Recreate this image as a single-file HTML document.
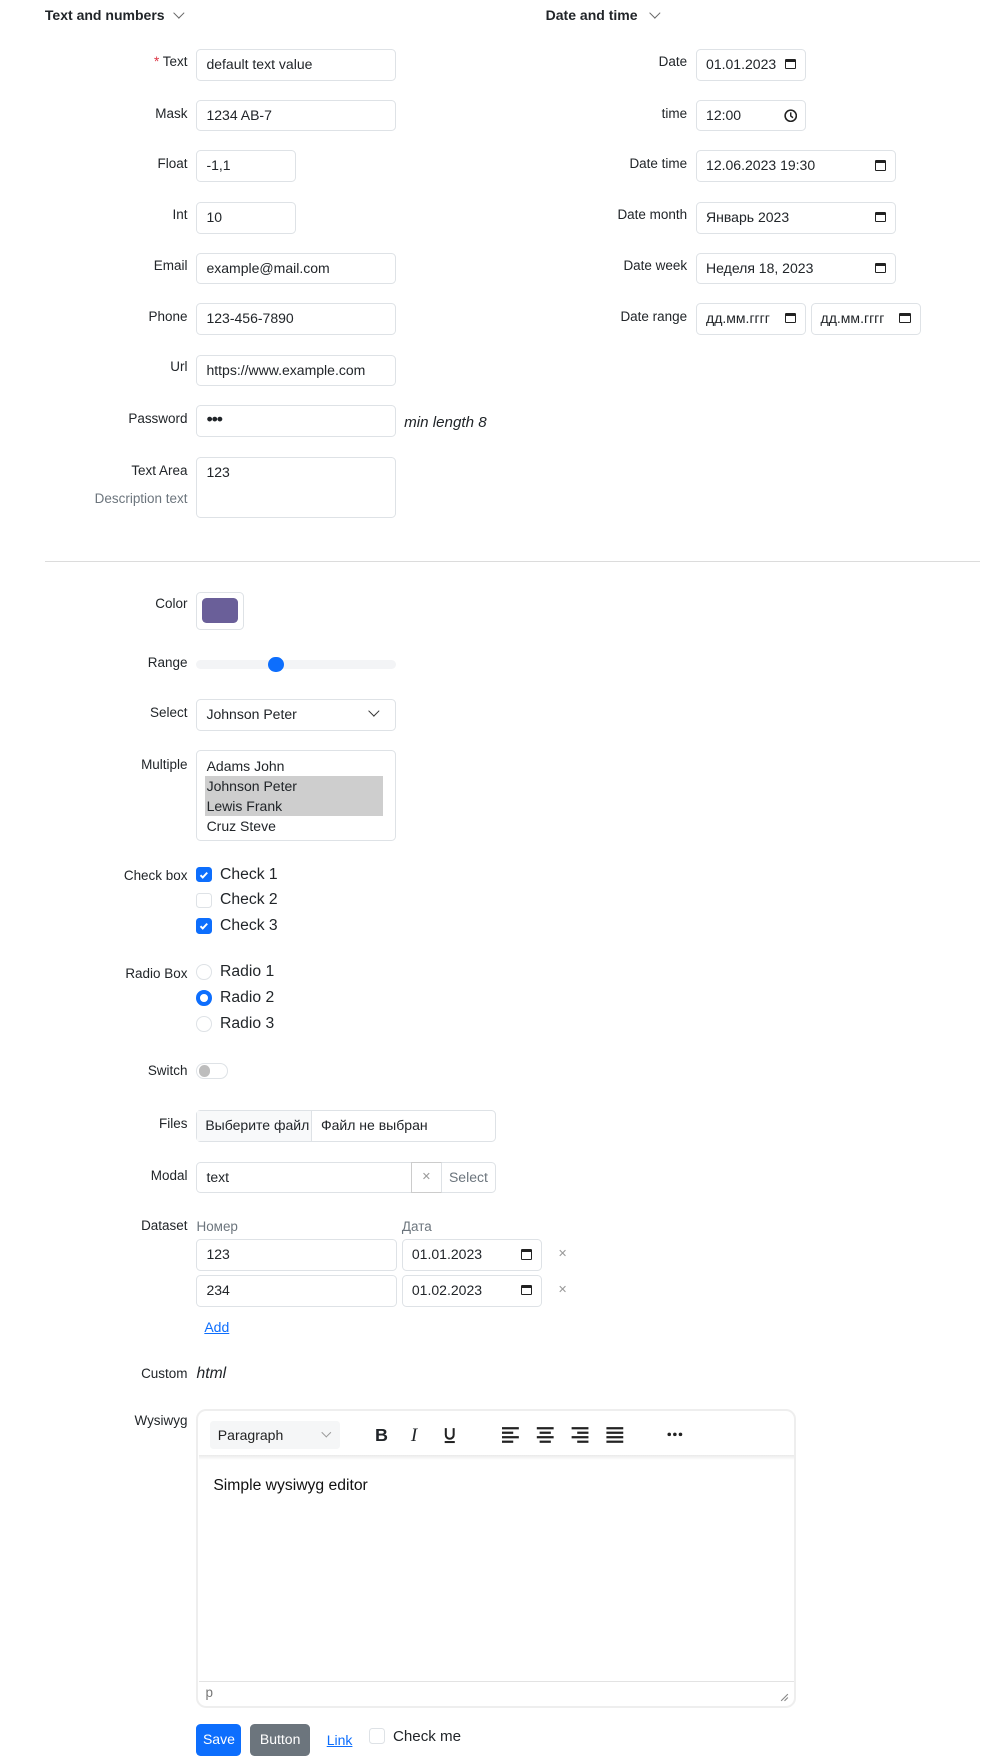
<!DOCTYPE html>
<html><head><meta charset="utf-8">
<style>
html{zoom:1.1227}
body{margin:0;width:880px;height:1568px;position:relative;background:#fff;font-family:"Liberation Sans","Noto Sans CJK SC",sans-serif;color:#212529;font-size:12px;overflow:hidden}
.a{position:absolute}
.h{font-weight:bold;font-size:12.5px;color:#212529}
.l{position:absolute;text-align:right;font-size:12px;color:#212529;white-space:nowrap}
.i{position:absolute;box-sizing:border-box;height:28px;border:1px solid #dee2e6;border-radius:4px;background:#fff;font-size:12.5px;padding:0 8px;line-height:26px;white-space:nowrap;color:#212529}
.cal{position:absolute;right:8px;top:8px;width:10px;height:9px;border:1.6px solid #222;border-top-width:3px;box-sizing:border-box;border-radius:1px}
.cb{position:absolute;width:14px;height:14px;box-sizing:border-box;border-radius:3px;border:1px solid #dee2e6;background:#fff}
.cb.on{background:#0d6efd;border-color:#0d6efd}
.rd{position:absolute;width:14px;height:14px;box-sizing:border-box;border-radius:50%;border:1px solid #dee2e6;background:#fff}
.t14{font-size:14px;position:absolute;white-space:nowrap}
.chev{position:absolute;width:6px;height:6px;border-right:1.3px solid #444;border-bottom:1.3px solid #444;transform:rotate(45deg)}
.bar{position:absolute;height:2px;background:#222}
</style></head><body>

<div class="a h" style="left:40px;top:6px">Text and numbers</div>
<div class="chev" style="left:156px;top:8px;border-color:#666;border-width:0 1px 1px 0;width:6px;height:6px"></div>
<div class="a h" style="left:486px;top:6px">Date and time</div>
<div class="chev" style="left:580px;top:8px;border-color:#666;border-width:0 1px 1px 0;width:6px;height:6px"></div>

<!-- left col -->
<div class="l" style="right:713px;top:48px"><span style="color:#dc3545">*</span> Text</div>
<div class="i" style="left:175px;top:44px;width:178px">default text value</div>
<div class="l" style="right:713px;top:94px">Mask</div>
<div class="i" style="left:175px;top:89px;width:178px">1234 AB-7</div>
<div class="l" style="right:713px;top:139px">Float</div>
<div class="i" style="left:175px;top:134px;width:89px">-1,1</div>
<div class="l" style="right:713px;top:184px">Int</div>
<div class="i" style="left:175px;top:180px;width:89px">10</div>
<div class="l" style="right:713px;top:230px">Email</div>
<div class="i" style="left:175px;top:225px;width:178px">example@mail.com</div>
<div class="l" style="right:713px;top:275px">Phone</div>
<div class="i" style="left:175px;top:270px;width:178px">123-456-7890</div>
<div class="l" style="right:713px;top:320px">Url</div>
<div class="i" style="left:175px;top:316px;width:178px">https://www.example.com</div>
<div class="l" style="right:713px;top:366px">Password</div>
<div class="i" style="left:175px;top:361px;width:178px;font-size:16px;letter-spacing:-1px;line-height:24px">•••</div>
<div class="a" style="left:360px;top:369px;font-style:italic;font-size:13.5px">min length 8</div>
<div class="l" style="right:713px;top:412px">Text Area</div>
<div class="l" style="right:713px;top:437px;color:#6c757d">Description text</div>
<div class="i" style="left:175px;top:407px;width:178px;height:54px;line-height:26px">123</div>

<!-- right col -->
<div class="l" style="right:268px;top:48px">Date</div>
<div class="i" style="left:620px;top:44px;width:98px">01.01.2023<span class="cal"></span></div>
<div class="l" style="right:268px;top:94px">time</div>
<div class="i" style="left:620px;top:89px;width:98px">12:00<svg class="a" style="right:7px;top:7px" width="12" height="12"><circle cx="6" cy="6" r="5" stroke="#222" stroke-width="1.4" fill="none"/><path d="M6 3v3.2l2 1.6" stroke="#222" stroke-width="1.3" fill="none"/></svg></div>
<div class="l" style="right:268px;top:139px">Date time</div>
<div class="i" style="left:620px;top:134px;width:178px">12.06.2023 19:30<span class="cal"></span></div>
<div class="l" style="right:268px;top:184px">Date month</div>
<div class="i" style="left:620px;top:180px;width:178px">Январь 2023<span class="cal"></span></div>
<div class="l" style="right:268px;top:230px">Date week</div>
<div class="i" style="left:620px;top:225px;width:178px">Неделя 18, 2023<span class="cal"></span></div>
<div class="l" style="right:268px;top:275px">Date range</div>
<div class="i" style="left:620px;top:270px;width:98px">дд.мм.гггг<span class="cal"></span></div>
<div class="i" style="left:722px;top:270px;width:98px">дд.мм.гггг<span class="cal"></span></div>

<div class="a" style="left:40px;top:500px;width:833px;height:1px;background:#dcdcdc"></div>

<div class="l" style="right:713px;top:531px">Color</div>
<div class="a" style="left:175px;top:527px;width:42px;height:34px;box-sizing:border-box;border:1px solid #dee2e6;border-radius:4px"></div>
<div class="a" style="left:180px;top:533px;width:32px;height:22px;background:#6a5f99;border-radius:4px"></div>

<div class="l" style="right:713px;top:583px">Range</div>
<div class="a" style="left:175px;top:588px;width:178px;height:8px;background:#f3f4f6;border-radius:4px"></div>
<div class="a" style="left:239px;top:585px;width:14px;height:14px;background:#0d6efd;border-radius:50%"></div>

<div class="l" style="right:713px;top:628px">Select</div>
<div class="i" style="left:175px;top:623px;width:178px">Johnson Peter</div>
<div class="chev" style="left:330px;top:630px;border-color:#333"></div>

<div class="l" style="right:713px;top:674px">Multiple</div>
<div class="a" style="left:175px;top:668px;width:178px;height:81px;box-sizing:border-box;border:1px solid #dee2e6;border-radius:4px"></div>
<div class="a" style="left:183px;top:691px;width:158px;height:36px;background:#cecece"></div>
<div class="a" style="left:184px;top:673px;font-size:12.5px;line-height:18px">Adams John<br>Johnson Peter<br>Lewis Frank<br>Cruz Steve</div>

<div class="l" style="right:713px;top:773px">Check box</div>
<div class="cb on" style="left:175px;top:772px"></div><svg class="a" style="left:175px;top:772px" width="14" height="14"><path d="M4 7.3l2 2 4-4.3" stroke="#fff" stroke-width="1.7" fill="none"/></svg>
<div class="t14" style="left:196px;top:771px">Check 1</div>
<div class="cb" style="left:175px;top:795px"></div>
<div class="t14" style="left:196px;top:794px">Check 2</div>
<div class="cb on" style="left:175px;top:818px"></div><svg class="a" style="left:175px;top:818px" width="14" height="14"><path d="M4 7.3l2 2 4-4.3" stroke="#fff" stroke-width="1.7" fill="none"/></svg>
<div class="t14" style="left:196px;top:817px">Check 3</div>

<div class="l" style="right:713px;top:860px">Radio Box</div>
<div class="rd" style="left:175px;top:859px"></div>
<div class="t14" style="left:196px;top:858px">Radio 1</div>
<div class="rd" style="left:175px;top:882px;border:4px solid #0d6efd"></div>
<div class="t14" style="left:196px;top:881px">Radio 2</div>
<div class="rd" style="left:175px;top:905px"></div>
<div class="t14" style="left:196px;top:904px">Radio 3</div>

<div class="l" style="right:713px;top:947px">Switch</div>
<div class="a" style="left:175px;top:947px;width:28px;height:14px;box-sizing:border-box;border:1px solid #dee2e6;border-radius:7px"></div>
<div class="a" style="left:177px;top:949px;width:10px;height:10px;background:#bdbdbd;border-radius:50%"></div>

<div class="l" style="right:713px;top:994px">Files</div>
<div class="i" style="left:175px;top:989px;width:267px;padding:0">
<span class="a" style="left:0;top:0;width:102px;height:26px;background:#f8f9fa;border-right:1px solid #dee2e6;padding-left:7px;box-sizing:border-box">Выберите файл</span>
<span class="a" style="left:110px;top:0">Файл не выбран</span></div>

<div class="l" style="right:713px;top:1040px">Modal</div>
<div class="i" style="left:175px;top:1035px;width:267px">text
<span class="a" style="left:190px;top:-1px;width:28px;height:28px;border:1px solid #ccc;border-right:1px solid #dee2e6;box-sizing:border-box;text-align:center;color:#999;font-size:10px;line-height:26px">✕</span>
<span class="a" style="left:224px;top:0;color:#6c757d">Select</span></div>

<div class="l" style="right:713px;top:1085px">Dataset</div>
<div class="a" style="left:175px;top:1086px;color:#6c757d;font-size:12px">Номер</div>
<div class="a" style="left:358px;top:1086px;color:#6c757d;font-size:12px">Дата</div>
<div class="i" style="left:175px;top:1104px;width:179px">123</div>
<div class="i" style="left:358px;top:1104px;width:125px">01.01.2023<span class="cal"></span></div>
<div class="a" style="left:497px;top:1111px;color:#999;font-size:10px">✕</div>
<div class="i" style="left:175px;top:1136px;width:179px">234</div>
<div class="i" style="left:358px;top:1136px;width:125px">01.02.2023<span class="cal"></span></div>
<div class="a" style="left:497px;top:1143px;color:#999;font-size:10px">✕</div>
<div class="a" style="left:182px;top:1175px;color:#0d6efd;text-decoration:underline;font-size:12.5px">Add</div>

<div class="l" style="right:713px;top:1217px">Custom</div>
<div class="a" style="left:175px;top:1216px;font-style:italic;font-size:14px">html</div>

<div class="l" style="right:713px;top:1259px">Wysiwyg</div>
<div class="a" style="left:175px;top:1255px;width:534px;height:266px;box-sizing:border-box;border:2px solid #eee;border-radius:9px"></div>
<div class="a" style="left:177px;top:1296px;width:530px;height:4px;background:linear-gradient(#e9e9e9,#fff)"></div>
<div class="a" style="left:187px;top:1266px;width:116px;height:25px;background:#f5f6f7;border-radius:3px"></div>
<div class="a" style="left:194px;top:1271px;font-size:12.5px;color:#222">Paragraph</div>
<div class="chev" style="left:288px;top:1273px;border-color:#999;width:5px;height:5px"></div>
<div class="a" style="left:334px;top:1269px;font-weight:bold;font-size:16px">B</div>
<div class="a" style="left:366px;top:1269px;font-style:italic;font-family:'Liberation Serif',serif;font-size:17px">I</div>
<svg class="a" style="left:395px;top:1271px" width="12" height="15"><path d="M2.5 1v6a3.5 3.5 0 0 0 7 0V1" stroke="#222" stroke-width="1.8" fill="none"/><rect x="1.5" y="12.5" width="9" height="1.8" fill="#222"/></svg>
<svg class="a" style="left:447px;top:1270px" width="120" height="16">
<g fill="#222">
<rect x="0" y="1" width="15" height="2"/><rect x="0" y="5" width="10" height="2"/><rect x="0" y="9" width="15" height="2"/><rect x="0" y="13" width="10" height="2"/>
<rect x="31" y="1" width="15" height="2"/><rect x="33.5" y="5" width="10" height="2"/><rect x="31" y="9" width="15" height="2"/><rect x="33.5" y="13" width="10" height="2"/>
<rect x="62" y="1" width="15" height="2"/><rect x="67" y="5" width="10" height="2"/><rect x="62" y="9" width="15" height="2"/><rect x="67" y="13" width="10" height="2"/>
<rect x="93" y="1" width="15" height="2"/><rect x="93" y="5" width="15" height="2"/><rect x="93" y="9" width="15" height="2"/><rect x="93" y="13" width="15" height="2"/>
</g></svg>
<svg class="a" style="left:594px;top:1275px" width="16" height="6"><g fill="#222"><circle cx="2" cy="3" r="1.6"/><circle cx="7" cy="3" r="1.6"/><circle cx="12" cy="3" r="1.6"/></g></svg>
<div class="a" style="left:190px;top:1316px;font-size:14px;color:#111">Simple wysiwyg editor</div>
<div class="a" style="left:177px;top:1497px;width:530px;height:1px;background:#e3e3e3"></div>
<div class="a" style="left:183px;top:1501px;font-size:12px;color:#777">p</div>
<svg class="a" style="left:695px;top:1508px" width="8" height="8"><path d="M1 7L7 1M4 7L7 4" stroke="#888" stroke-width="1"/></svg>

<div class="a" style="left:175px;top:1536px;width:40px;height:28px;background:#0d6efd;border-radius:4px;color:#fff;font-size:12.5px;text-align:center;line-height:28px">Save</div>
<div class="a" style="left:223px;top:1536px;width:53px;height:28px;background:#6c757d;border-radius:4px;color:#fff;font-size:12.5px;text-align:center;line-height:28px">Button</div>
<div class="a" style="left:291px;top:1543px;color:#0d6efd;text-decoration:underline;font-size:12.5px">Link</div>
<div class="cb" style="left:329px;top:1539px"></div>
<div class="t14" style="left:350px;top:1539px;font-size:13.5px">Check me</div>
</body></html>
